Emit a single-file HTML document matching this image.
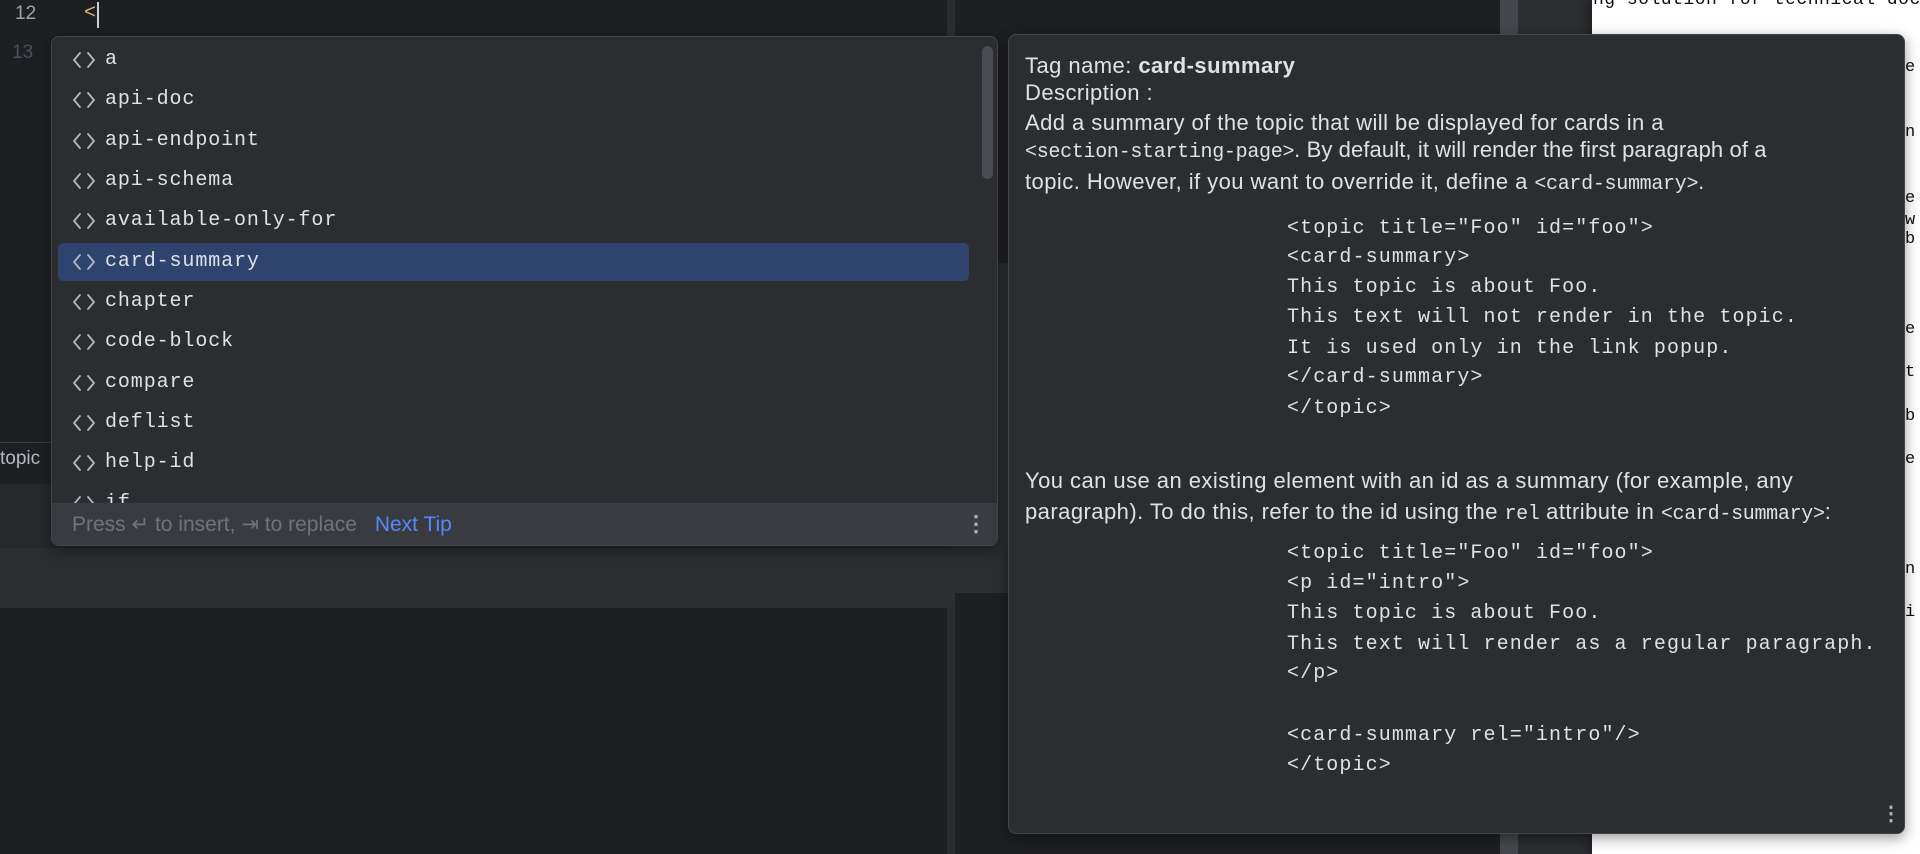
<!DOCTYPE html>
<html><head><meta charset="utf-8"><style>
*{margin:0;padding:0;box-sizing:border-box}
body{width:1920px;height:854px;overflow:hidden;background:#1e1f22;position:relative;font-family:"Liberation Sans",sans-serif;color:#dfe1e5}
.abs{position:absolute}
.mono{font-family:"Liberation Mono",monospace}
.item{position:absolute;left:0;height:40px;line-height:40px;font-size:20px;white-space:nowrap}
.item svg{position:absolute;left:20px;top:11px}
.item .t{position:absolute;left:53px;letter-spacing:0.9px}
.dl{position:absolute;left:16px;height:26px;line-height:26px;font-size:22px;letter-spacing:0.45px;white-space:nowrap}
.cl{position:absolute;left:278px;height:26px;line-height:26px;font-size:20px;letter-spacing:1.1px;white-space:nowrap;font-family:"Liberation Mono",monospace}
.ic2{font-family:"Liberation Mono",monospace;letter-spacing:-0.3px;font-size:20px}
.wt{position:absolute;left:1905px;font-family:"Liberation Mono",monospace;font-size:17px;color:#111}
</style></head><body>
<svg width="0" height="0" style="position:absolute"><defs><symbol id="br" viewBox="0 0 24 18"><path d="M8 2 L2 9 L8 16 M16 2 L22 9 L16 16" fill="none" stroke="#b4b8bf" stroke-width="1.8" stroke-linecap="round" stroke-linejoin="round"/></symbol></defs></svg>
<!-- background panes -->
<div class="abs" style="left:0;top:442px;width:955px;height:42px;background:#1e1f22;border-top:1px solid #393b40"></div>
<div class="abs" style="left:0;top:484px;width:955px;height:64px;background:#26282b"></div>
<div class="abs" style="left:0;top:548px;width:955px;height:60px;background:#2b2d30"></div>
<div class="abs" style="left:0;top:448px;font-size:19px;color:#b4b8bf">topic</div>
<div class="abs" style="left:947px;top:0;width:8px;height:854px;background:#2b2d30"></div>
<div class="abs" style="left:955px;top:0;width:545px;height:854px;background:#1e1f22"></div>
<div class="abs" style="left:955px;top:263px;width:60px;height:330px;background:#2b2d30"></div>
<div class="abs" style="left:1500px;top:0;width:18px;height:854px;background:#45474c"></div>
<div class="abs" style="left:1518px;top:0;width:74px;height:854px;background:#2b2d30"></div>
<div class="abs" style="left:1592px;top:0;width:328px;height:854px;background:#fff;box-shadow:-4px 0 8px rgba(0,0,0,.3)"></div>
<div class="abs mono" style="left:1593px;top:-10px;font-size:18px;color:#111;white-space:nowrap;letter-spacing:0.5px">ng solution for technical docu</div>
<div class="wt" style="top:58px">e</div><div class="wt" style="top:123px">n</div><div class="wt" style="top:189px">e</div><div class="wt" style="top:211px">w</div><div class="wt" style="top:230px">b</div><div class="wt" style="top:320px">e</div><div class="wt" style="top:363px">t</div><div class="wt" style="top:407px">b</div><div class="wt" style="top:450px">e</div><div class="wt" style="top:560px">n</div><div class="wt" style="top:603px">i</div>
<!-- editor -->
<div class="abs" style="left:15px;top:3px;font-size:19px;color:#a1a3ab">12</div>
<div class="abs" style="left:12px;top:42px;font-size:19px;color:#4b5059">13</div>
<div class="abs mono" style="left:84px;top:2px;font-size:20px;color:#d5b778">&lt;</div>
<div class="abs" style="left:97px;top:2px;width:2px;height:26px;background:#ced0d6"></div>
<!-- completion popup -->
<div class="abs" style="left:51px;top:36px;width:947px;height:510px;background:#2b2d30;border:1px solid #43454a;border-radius:8px;overflow:hidden;box-shadow:0 4px 14px rgba(0,0,0,.4)">
 <div class="abs" style="left:930px;top:9px;width:11px;height:133px;background:#4a4c51;border-radius:6px"></div>
 <div class="abs" style="left:0;top:0;width:945px;height:466px;overflow:hidden">
  <div class="abs" style="left:6px;top:206px;width:911px;height:38px;background:#2e436e;border-radius:5px"></div>
  <div class="item" style="top:3px"><svg width="24" height="18"><use href="#br"/></svg><span class="t mono">a</span></div>
  <div class="item" style="top:43px"><svg width="24" height="18"><use href="#br"/></svg><span class="t mono">api-doc</span></div>
  <div class="item" style="top:84px"><svg width="24" height="18"><use href="#br"/></svg><span class="t mono">api-endpoint</span></div>
  <div class="item" style="top:124px"><svg width="24" height="18"><use href="#br"/></svg><span class="t mono">api-schema</span></div>
  <div class="item" style="top:164px"><svg width="24" height="18"><use href="#br"/></svg><span class="t mono">available-only-for</span></div>
  <div class="item" style="top:205px"><svg width="24" height="18"><use href="#br"/></svg><span class="t mono">card-summary</span></div>
  <div class="item" style="top:245px"><svg width="24" height="18"><use href="#br"/></svg><span class="t mono">chapter</span></div>
  <div class="item" style="top:285px"><svg width="24" height="18"><use href="#br"/></svg><span class="t mono">code-block</span></div>
  <div class="item" style="top:326px"><svg width="24" height="18"><use href="#br"/></svg><span class="t mono">compare</span></div>
  <div class="item" style="top:366px"><svg width="24" height="18"><use href="#br"/></svg><span class="t mono">deflist</span></div>
  <div class="item" style="top:406px"><svg width="24" height="18"><use href="#br"/></svg><span class="t mono">help-id</span></div>
  <div class="item" style="top:447px"><svg width="24" height="18"><use href="#br"/></svg><span class="t mono">if</span></div>
 </div>
 <div class="abs" style="left:0;top:466px;width:945px;height:44px;background:#393b40"></div>
 <div class="abs" style="left:20px;top:475px;font-size:21px;color:#6f737a;white-space:nowrap">Press ↵ to insert, ⇥ to replace <span style="color:#548af7;margin-left:12px">Next Tip</span></div>
 <div class="abs" style="left:913px;top:474px;font-size:22px;color:#b4b8bf;font-weight:bold">⋮</div>
</div>
<!-- doc popup -->
<div class="abs" style="left:1008px;top:34px;width:897px;height:800px;background:#2b2d30;border:1px solid #43454a;border-radius:8px;box-shadow:0 4px 14px rgba(0,0,0,.4)">
 <div class="dl" style="top:18px">Tag name: <b>card-summary</b></div>
 <div class="dl" style="top:45px">Description :</div>
 <div class="dl" style="top:75px">Add a summary of the topic that will be displayed for cards in a</div>
 <div class="dl" style="top:102px;letter-spacing:0.1px"><span class="ic2">&lt;section-starting-page&gt;</span>. By default, it will render the first paragraph of a</div>
 <div class="dl" style="top:134px">topic. However, if you want to override it, define a <span class="ic2">&lt;card-summary&gt;</span>.</div>
 <div class="cl" style="top:181px">&lt;topic title="Foo" id="foo"&gt;</div>
 <div class="cl" style="top:210px">&lt;card-summary&gt;</div>
 <div class="cl" style="top:240px">This topic is about Foo.</div>
 <div class="cl" style="top:270px">This text will not render in the topic.</div>
 <div class="cl" style="top:301px">It is used only in the link popup.</div>
 <div class="cl" style="top:330px">&lt;/card-summary&gt;</div>
 <div class="cl" style="top:361px">&lt;/topic&gt;</div>
 <div class="dl" style="top:433px">You can use an existing element with an id as a summary (for example, any</div>
 <div class="dl" style="top:464px">paragraph). To do this, refer to the id using the <span class="ic2">rel</span> attribute in <span class="ic2">&lt;card-summary&gt;</span>:</div>
 <div class="cl" style="top:506px">&lt;topic title="Foo" id="foo"&gt;</div>
 <div class="cl" style="top:536px">&lt;p id="intro"&gt;</div>
 <div class="cl" style="top:566px">This topic is about Foo.</div>
 <div class="cl" style="top:597px">This text will render as a regular paragraph.</div>
 <div class="cl" style="top:626px">&lt;/p&gt;</div>
 <div class="cl" style="top:688px">&lt;card-summary rel="intro"/&gt;</div>
 <div class="cl" style="top:718px">&lt;/topic&gt;</div>
 <div class="abs" style="left:872px;top:766px;font-size:20px;color:#b4b8bf;font-weight:bold">⋮</div>
</div>
</body></html>
